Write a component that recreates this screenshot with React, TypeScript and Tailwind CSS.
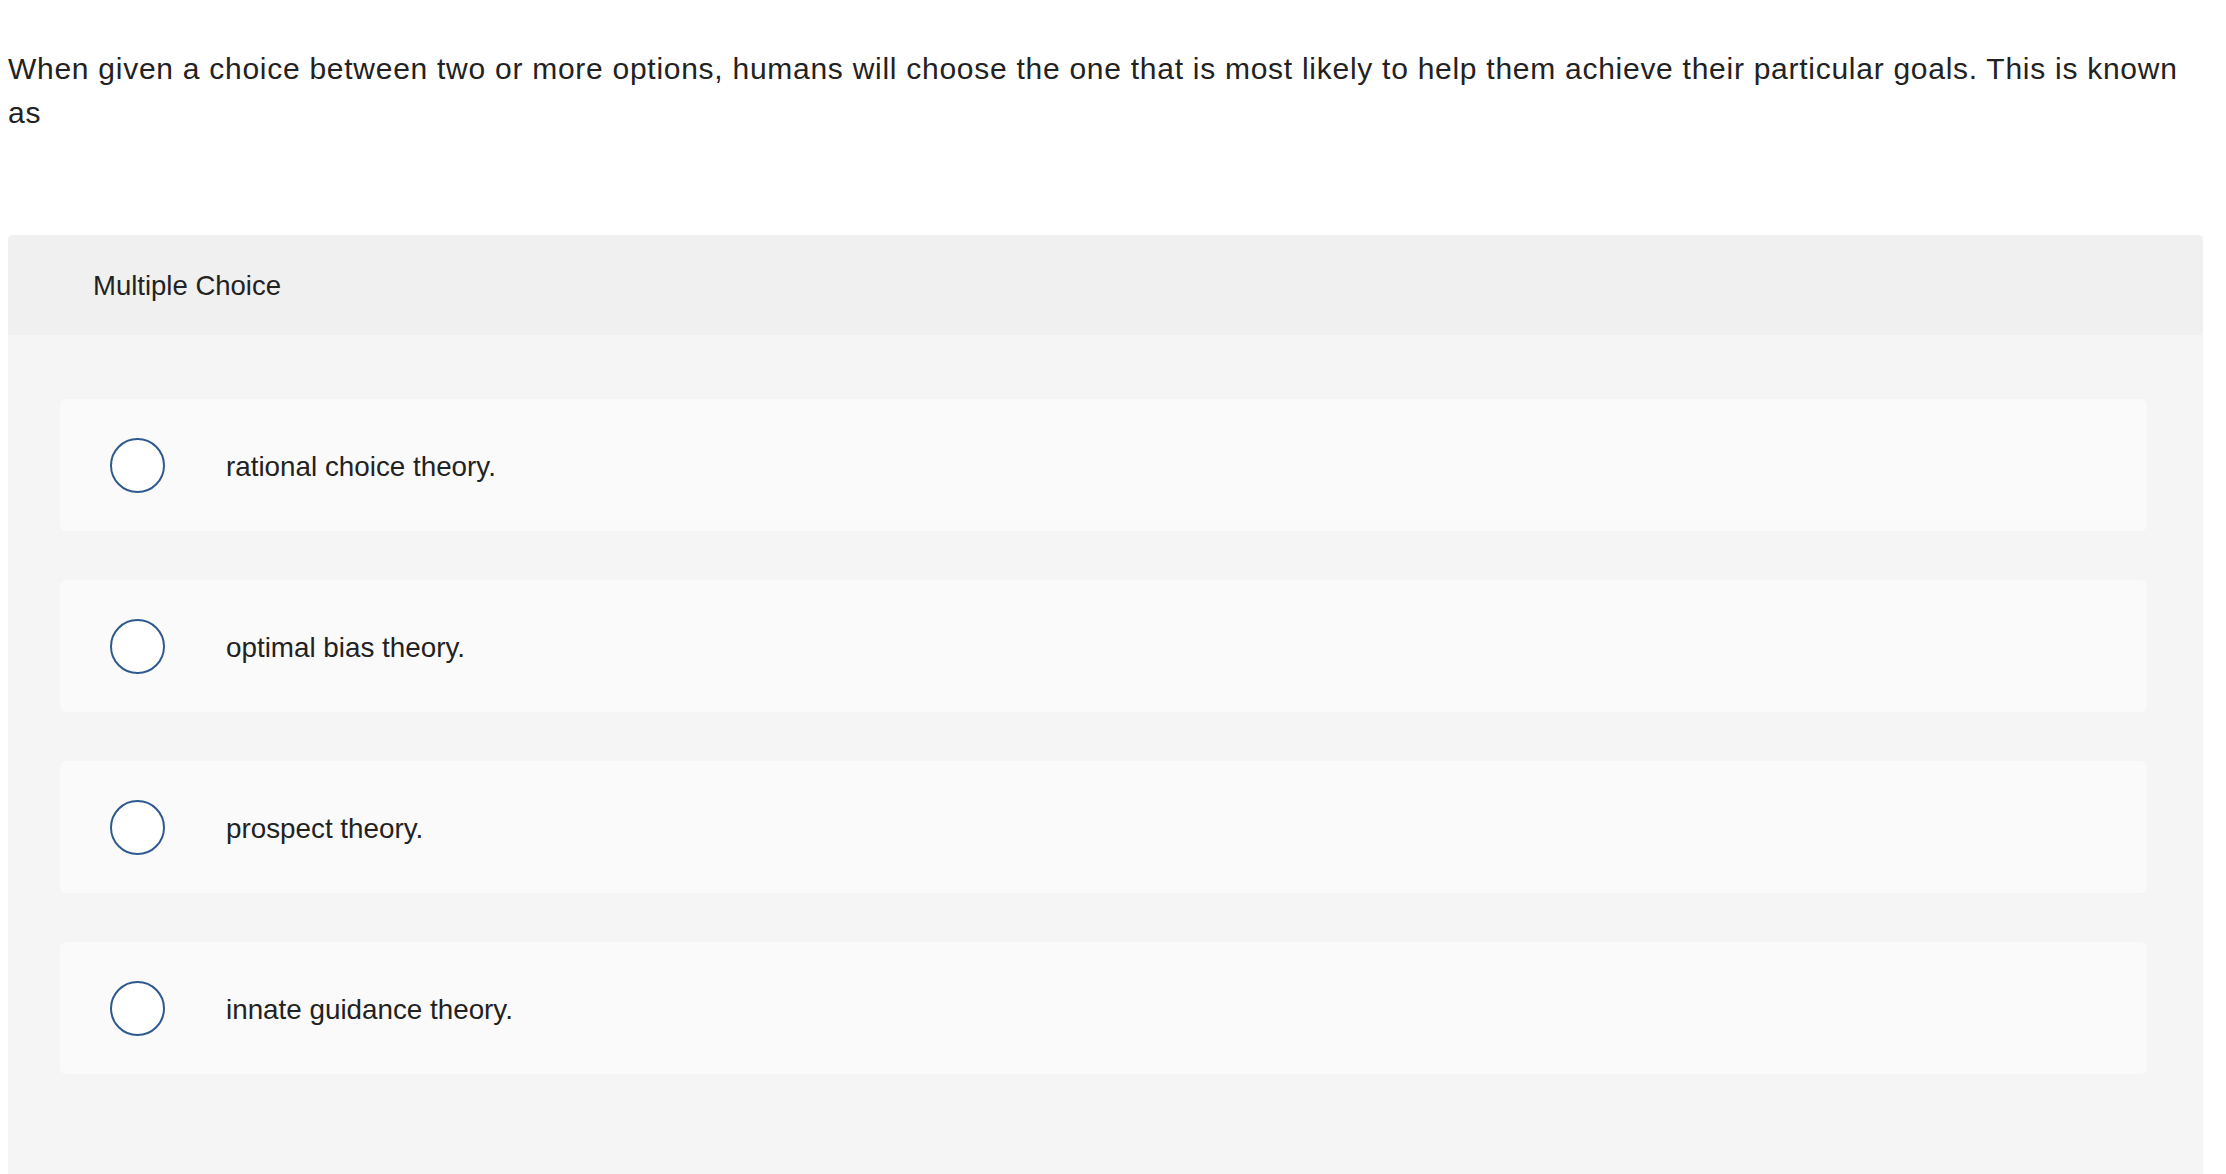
import React from "react";

const options = [
  "rational choice theory.",
  "optimal bias theory.",
  "prospect theory.",
  "innate guidance theory.",
];

export default function App() {
  return (
    <div
      className="h-screen w-full overflow-hidden bg-white text-[#222222]"
      style={{ fontFamily: '"Liberation Sans", Arial, sans-serif' }}
    >
      <div className="pl-[8px] pr-[23px] pt-[47px]">
        <p className="text-[30px] leading-[44px] tracking-[0.73px]">
          When given a choice between two or more options, humans will choose the one that is most likely to help them achieve their particular goals. This is known as
        </p>

        <div className="mt-[100px] rounded-t-[5px] bg-[#f5f5f5] overflow-hidden">
          <div className="flex h-[100px] items-center bg-[#f0f0f0] pl-[85px] pt-[1px] text-[27.5px]">
            Multiple Choice
          </div>
          <div className="flex flex-col gap-[49px] pl-[52px] pr-[56px] pt-[64px] pb-[200px]">
            {options.map((o) => (
              <div
                key={o}
                className="flex h-[132px] items-center rounded-[6px] bg-[#fafafa] pl-[50px]"
              >
                <div className="h-[55px] w-[55px] shrink-0 rounded-full border-2 border-[#2f5a8f] bg-white" />
                <span className="ml-[61px] pt-[3px] text-[27.8px]">{o}</span>
              </div>
            ))}
          </div>
        </div>
      </div>
    </div>
  );
}
